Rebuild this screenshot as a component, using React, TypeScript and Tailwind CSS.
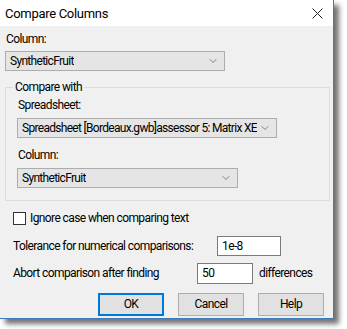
import { ChevronDown } from "lucide-react";

function Combo({ value, width }: { value: string; width: string }) {
  return (
    <div
      className={`${width} h-[20px] flex items-center justify-between gap-[2px] border border-[#adadad] bg-[#e5e5e5] pl-[4px] pr-[5px]`}
    >
      <span className="overflow-hidden whitespace-nowrap tracking-[-0.7px]">{value}</span>
      <ChevronDown className="w-[12px] h-[12px] text-[#444] shrink-0" strokeWidth={1.25} />
    </div>
  );
}

function Button({ label, primary }: { label: string; primary?: boolean }) {
  return (
    <button
      className={`w-[66px] h-[23px] bg-[#e1e1e1] flex items-center justify-center ${
        primary ? "border-2 border-[#0078d7]" : "border border-[#adadad]"
      }`}
    >
      {label}
    </button>
  );
}

export default function App() {
  return (
    <div className="w-[347px] h-[329px] bg-white font-['Roboto',sans-serif] text-[12px] leading-[15px] tracking-[-0.6px] text-black">
      <div className="w-[334px] border-r border-b border-[#3d7cb8] shadow-[5px_5px_5px_rgba(0,0,0,0.55)]">
        <div className="h-[26px] bg-white flex items-center justify-between pl-[5px] pr-[10px]">
          <span className="text-[13px] tracking-[-0.3px]">Compare Columns</span>
          <svg width="11" height="11" viewBox="0 0 11 11" className="mt-[1px]">
            <path d="M0.5 0.5 L10.5 10.5 M10.5 0.5 L0.5 10.5" stroke="#222" strokeWidth="1" />
          </svg>
        </div>
        <div className="bg-[#f0f0f0] h-[292px] pl-[5px] pt-[6px]">
          <div className="pl-[1px]">Column:</div>
          <div className="mt-[4px]">
            <Combo value="SyntheticFruit" width="w-[220px]" />
          </div>
          <fieldset className="mt-[9px] w-[325px] h-[121px] border border-[#dcdcdc]">
            <legend className="ml-[7px] px-[2px]">Compare with</legend>
            <div className="pl-[11px]">
              <div className="mt-[3px] pl-[1px]">Spreadsheet:</div>
              <div className="mt-[5px]">
                <Combo value="Spreadsheet [Bordeaux.gwb]assessor 5: Matrix XE" width="w-[260px]" />
              </div>
              <div className="mt-[10px] pl-[1px]">Column:</div>
              <div className="mt-[5px]">
                <Combo value="SyntheticFruit" width="w-[221px]" />
              </div>
            </div>
          </fieldset>
          <div className="mt-[10px] pl-[8px] flex items-center gap-[4px]">
            <div className="w-[13px] h-[13px] border border-[#333] bg-white" />
            <span>Ignore case when comparing text</span>
          </div>
          <div className="mt-[10px] pl-[8px] flex items-center">
            <span className="w-[204px] whitespace-nowrap">Tolerance for numerical comparisons:</span>
            <div className="w-[64px] h-[20px] border border-[#7a7a7a] bg-white pl-[4px] flex items-center">1e-8</div>
          </div>
          <div className="mt-[7px] pl-[8px] flex items-center">
            <span className="w-[184px] whitespace-nowrap">Abort comparison after finding</span>
            <div className="w-[56px] h-[21px] border border-[#7a7a7a] bg-white pl-[4px] flex items-center">50</div>
            <span className="ml-[6px]">differences</span>
          </div>
          <div className="mt-[9px] pl-[93px] flex gap-[14px]">
            <Button label="OK" primary />
            <Button label="Cancel" />
            <Button label="Help" />
          </div>
        </div>
      </div>
    </div>
  );
}
